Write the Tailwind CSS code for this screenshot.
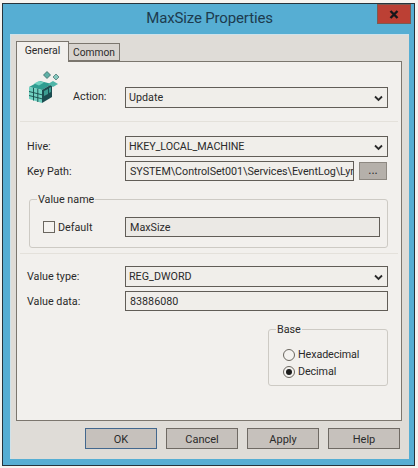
<!DOCTYPE html>
<html>
<head>
<meta charset="utf-8">
<script src="https://cdn.jsdelivr.net/npm/@tailwindcss/browser@4"></script>
</head>
<body class="m-0 bg-[#f6f4f0]">
<div class="w-[418px] h-[468px] pt-[3px] pl-[2px] pr-[3px] pb-[2px] font-['Roboto',sans-serif] text-[10.75px] text-[#2b2b2b] leading-none">
  <div class="w-full h-full border border-[#26343c] bg-[#56aed3] flex flex-col pl-[7px] pr-[5px] pb-[6px]">
    <div class="relative h-[30px] flex items-center justify-center text-[15px] tracking-[-0.15px] text-[#1d3b4e] shrink-0 pb-[1px]">
      MaxSize Properties
      <div class="absolute right-[-2px] top-0 w-[34px] h-[20px] bg-[#bc4034] border border-[#7d5a50] flex items-center justify-center">
        <svg width="10" height="9" viewBox="0 0 10 9"><path d="M1.500 1 L8.500 8 M8.500 1 L1.500 8" stroke="#15161a" stroke-width="2.400"/></svg>
      </div>
    </div>
    <div class="flex-1 bg-[#dfdcd7] border-t border-l border-[#cfe2ea] pl-[5px] pt-[6px] flex flex-col">
      <div class="flex items-end h-[20px] shrink-0 relative z-10">
        <div class="w-[53px] h-[21px] bg-[#f2f0ed] border border-[#7b766e] border-b-0 flex items-center justify-center pb-[1px] -mb-px text-[10.5px]">General</div>
        <div class="w-[51px] h-[18px] bg-[#d8d4cf] border border-l-0 border-[#7b766e] flex items-center justify-center pt-[2px] text-[10.25px]">Common</div>
      </div>
      <div class="h-[360px] w-[386px] bg-[#f2f0ed] border border-[#7b766e] shrink-0 flex flex-col pt-[8px] pl-[10px] pr-[12px]">

        <div class="h-[38px] flex items-start shrink-0">
          <div class="w-[98px] flex shrink-0">
            <svg class="shrink-0" width="32" height="34" viewBox="0 0 32 34">
              <path d="M20 1.500l3.500 3.500-3.500 3.500-3.500-3.500z" fill="#5fb0a6" stroke="#2a5a58" stroke-width=".7"/>
              <path d="M29 4l3 3-3 3-3-3z" fill="#86c8be" stroke="#3f6b68" stroke-width=".7"/>
              <path d="M2 17 L13 11 L25 14 L15 20 Z" fill="#2f9c90"/>
              <path d="M2 17 L15 20 L15 33 L2 29 Z" fill="#6fd0c0"/>
              <path d="M15 20 L25 14 L25 27 L15 33 Z" fill="#1c4c50"/>
              <path d="M21 14l5-3 5 3-5 3z" fill="#4fb5a8"/>
              <path d="M17 21l4-2v5l-4 2zM22 18l2-1v5l-2 1z" fill="#3b9c91"/>
              <path d="M7 13.500l5-2.500 5 1.500-5 3z" fill="#6fd0c0"/>
              <path d="M2 21.500l13 3.300M2 25.500l13 3.300M6.500 18v12.500M10.800 19v13" stroke="#17494a" stroke-width=".9" fill="none"/>
            </svg>
            <span class="ml-[14px] mt-[22px]">Action:</span>
          </div>
          <div class="mt-[17px] w-[263px] h-[21px] border border-[#615d57] bg-[#f0eeea] flex items-center justify-between pl-[3px] pr-[4px] pt-[2px]">
            <span>Update</span>
            <svg width="9" height="7" viewBox="0 0 9 7"><path d="M1 1.500 L4.500 5 L8 1.500" stroke="#2a2a2a" stroke-width="1.800" fill="none"/></svg>
          </div>
        </div>

        <div class="mt-[13px] h-px bg-[#e4e1db] -ml-[7px] -mr-[9px] shrink-0"></div>

        <div class="mt-[14px] h-[21px] flex items-center shrink-0">
          <span class="w-[98px] shrink-0 pt-[2px]">Hive:</span>
          <div class="w-[263px] h-[21px] border border-[#615d57] bg-[#f0eeea] flex items-center justify-between pl-[3px] pr-[4px] pt-[2px]">
            <span class="tracking-[-0.1px]">HKEY_LOCAL_MACHINE</span>
            <svg width="9" height="7" viewBox="0 0 9 7"><path d="M1 1.500 L4.500 5 L8 1.500" stroke="#2a2a2a" stroke-width="1.800" fill="none"/></svg>
          </div>
        </div>

        <div class="mt-[4px] h-[20px] flex items-center shrink-0">
          <span class="w-[98px] shrink-0 pt-[2px]">Key Path:</span>
          <div class="w-[229px] h-[20px] border border-[#615d57] bg-[#f0eeea] flex items-center pl-[4px] pt-[2px] overflow-hidden whitespace-nowrap shrink-0 tracking-[-0.05px]">SYSTEM\ControlSet001\Services\EventLog\Lyr</div>
          <div class="ml-[5px] w-[28px] h-[18px] bg-[#b5b0aa] border border-[#8d8881] flex items-center justify-center pb-[3px] text-[12px] shrink-0">...</div>
        </div>

        <div class="relative mt-[18px] ml-[2px] w-[359px] h-[49px] border border-[#cdcac4] rounded-[3px] flex items-start pt-[17px] pl-[13px] shrink-0">
          <span class="absolute left-[7px] -top-[5px] bg-[#f2f0ed] px-px">Value name</span>
          <div class="w-[82px] h-[20px] flex items-center shrink-0">
            <div class="w-[12px] h-[12px] border border-[#6a665f] bg-[#f4f2ef] mr-[3px]"></div>
            <span class="pt-[2px]">Default</span>
          </div>
          <div class="w-[255px] h-[20px] border border-[#615d57] bg-[#ebe9e5] flex items-center pl-[4px] pt-[2px]">MaxSize</div>
        </div>

        <div class="mt-[5px] h-px bg-[#e4e1db] -ml-[7px] -mr-[9px] shrink-0"></div>

        <div class="mt-[12px] h-[21px] flex items-center shrink-0">
          <span class="w-[98px] shrink-0 pt-[2px]">Value type:</span>
          <div class="w-[263px] h-[21px] border border-[#615d57] bg-[#f0eeea] flex items-center justify-between pl-[3px] pr-[4px] pt-[2px]">
            <span>REG_DWORD</span>
            <svg width="9" height="7" viewBox="0 0 9 7"><path d="M1 1.500 L4.500 5 L8 1.500" stroke="#2a2a2a" stroke-width="1.800" fill="none"/></svg>
          </div>
        </div>

        <div class="mt-[4px] h-[20px] flex items-center shrink-0">
          <span class="w-[98px] shrink-0 pt-[2px]">Value data:</span>
          <div class="w-[263px] h-[20px] border border-[#615d57] bg-[#f0eeea] flex items-center pl-[4px] pt-[2px]">83886080</div>
        </div>

        <div class="relative mt-[18px] ml-[241px] w-[120px] h-[57px] border border-[#cdcac4] rounded-[3px] flex flex-col gap-[5px] pt-[19px] pl-[14px] shrink-0">
          <span class="absolute left-[7px] -top-[5px] bg-[#f2f0ed] px-px">Base</span>
          <div class="h-[12px] flex items-center">
            <div class="w-[12px] h-[12px] rounded-full border border-[#6a665f] bg-[#f4f2ef] mr-[3px]"></div>
            <span class="tracking-[-0.1px] pt-[1px]">Hexadecimal</span>
          </div>
          <div class="h-[12px] flex items-center">
            <div class="w-[12px] h-[12px] rounded-full border border-[#6a665f] bg-[#f4f2ef] mr-[3px] flex items-center justify-center">
              <div class="w-[6px] h-[6px] rounded-full bg-[#1c1c1c]"></div>
            </div>
            <span class="tracking-[-0.1px] pt-[1px]">Decimal</span>
          </div>
        </div>
      </div>

      <div class="mt-[7px] w-[384px] flex justify-end gap-[9px] shrink-0 text-[11px]">
        <div class="w-[72px] h-[21px] bg-[#c6c1bc] border border-[#43688e] flex items-center justify-center pt-[2px]">OK</div>
        <div class="w-[72px] h-[21px] bg-[#c6c1bc] border border-[#6f6a64] flex items-center justify-center pt-[2px]">Cancel</div>
        <div class="w-[72px] h-[21px] bg-[#c6c1bc] border border-[#6f6a64] flex items-center justify-center pt-[2px]">Apply</div>
        <div class="w-[72px] h-[21px] bg-[#c6c1bc] border border-[#6f6a64] flex items-center justify-center pt-[2px]">Help</div>
      </div>
    </div>
  </div>
</div>
</body>
</html>
